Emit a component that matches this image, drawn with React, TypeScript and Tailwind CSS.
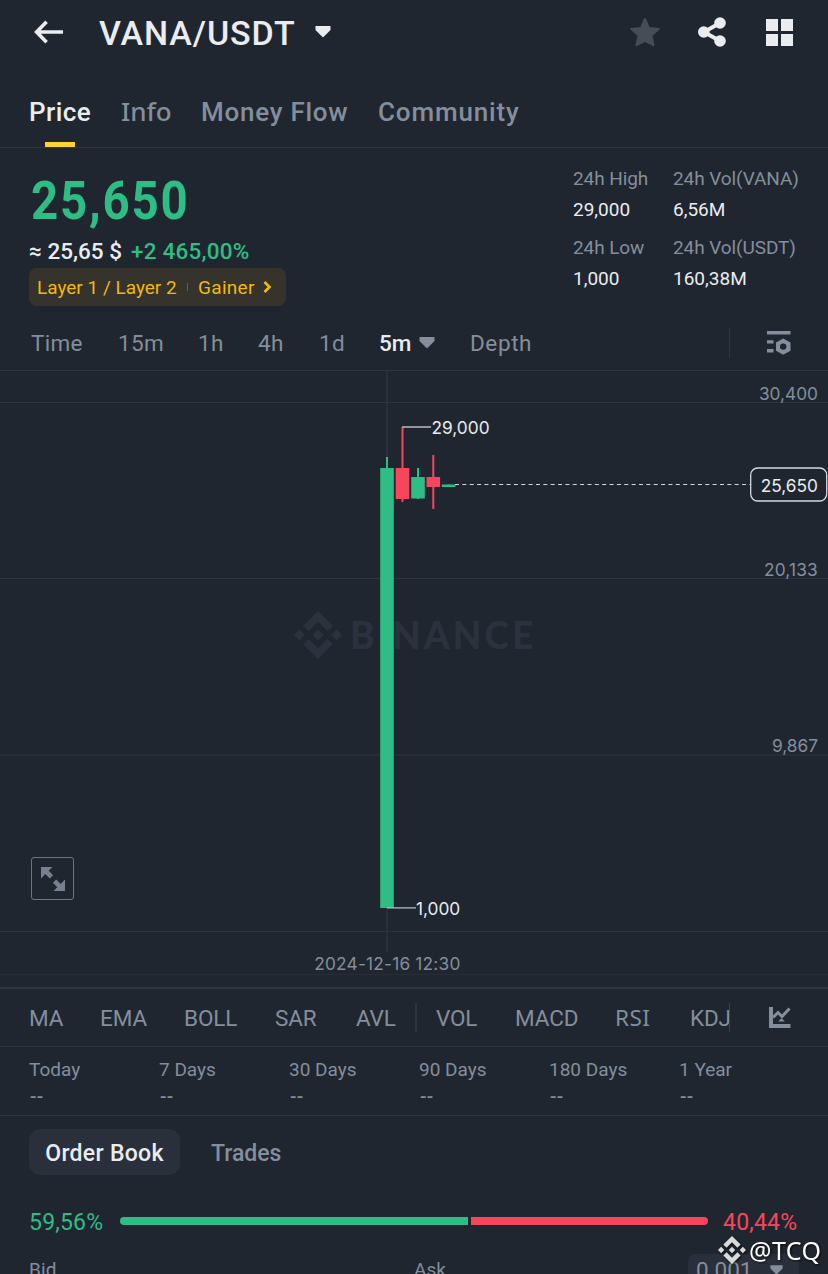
import React, { useState } from 'react';

type Candle = {
  x: number;
  high: number;
  low: number;
  top: number;
  bottom: number;
  up: boolean;
};

const GREEN = '#2ebd85';
const RED = '#f6465d';
const GRID = '#2e3541';

const tabs = [
  { label: 'Price', width: 'w-[92px]', style: 'tracking-[0.45px]' },
  { label: 'Info', width: 'w-[80px]', style: "font-['Noto_Sans',sans-serif] -mt-[2px]" },
  { label: 'Money Flow', width: 'w-[177px]', style: 'tracking-[0.75px]' },
  { label: 'Community', width: 'w-[150px]', style: 'tracking-[0.85px]' },
];

const stats = [
  { label: '24h High', value: '29,000' },
  { label: '24h Vol(VANA)', value: '6,56M' },
  { label: '24h Low', value: '1,000' },
  { label: '24h Vol(USDT)', value: '160,38M' },
];

const intervals = [
  { label: 'Time', width: 'w-[87px]' },
  { label: '15m', width: 'w-[80px]' },
  { label: '1h', width: 'w-[60px]' },
  { label: '4h', width: 'w-[61px]' },
  { label: '1d', width: 'w-[60px]' },
];

const mainIndicators = [
  { label: 'MA', width: 'w-[71px]' },
  { label: 'EMA', width: 'w-[84px]' },
  { label: 'BOLL', width: 'w-[91px]' },
  { label: 'SAR', width: 'w-[81px]' },
  { label: 'AVL', width: 'w-[59px]' },
];

const subIndicators = [
  { label: 'VOL', width: 'w-[79px]', style: 'pt-[3px] tracking-[-0.2px]' },
  { label: 'MACD', width: 'w-[100px]', style: 'pt-[3px] tracking-[-0.1px]' },
  { label: 'RSI', width: 'w-[75px]', style: "pt-px font-['Noto_Sans',sans-serif] tracking-[0.5px]" },
  { label: 'KDJ', width: 'w-[40px]', style: 'pt-[3px] tracking-[-0.2px]' },
];

const periods = ['Today', '7 Days', '30 Days', '90 Days', '180 Days', '1 Year'];

// coordinates are in chart pixels
const candles: Candle[] = [
  { x: 387, high: 86, low: 537, top: 97, bottom: 537, up: true },
  { x: 402.5, high: 56, low: 131, top: 97, bottom: 128, up: false },
  { x: 418, high: 97, low: 128, top: 106, bottom: 127.5, up: true },
  { x: 433.3, high: 84, low: 138, top: 106, bottom: 116, up: false },
  { x: 448.7, high: 113.5, low: 116, top: 113.5, bottom: 116, up: true },
];

const Caret: React.FC<{ className?: string }> = ({ className }) => (
  <svg width="16" height="12" viewBox="0 0 16 12" fill="currentColor" className={className}>
    <path d="M.5 0h15v4L9 10.6a1.3 1.3 0 0 1-2 0L.5 4z" />
  </svg>
);

const BinanceMark: React.FC<{ size: number }> = ({ size }) => (
  <svg width={size} height={size} viewBox="0 0 126.6 126.6" fill="currentColor">
    <path d="M38.7 53.2 63.3 28.6 87.9 53.2l14.3-14.3L63.3 0 24.4 38.9zM0 63.3 14.3 49l14.3 14.3-14.3 14.3zM38.7 73.4 63.3 98l24.6-24.6 14.3 14.3-38.9 38.9-38.9-38.9zM98 63.3 112.3 49l14.3 14.3-14.3 14.3zM77.8 63.3 63.3 48.8 48.8 63.3l14.5 14.5z" />
  </svg>
);

const Header: React.FC = () => (
  <header className="flex h-16 items-center pl-[34px] pr-[35px] text-[#eaecef]">
    <svg width="30" height="24" viewBox="0 0 30 24" fill="none" stroke="currentColor" strokeWidth="3.6">
      <path d="M29 12H3M12.6 1.8 2.6 12l10 10.2" />
    </svg>
    <h1 className="ml-[35px] w-[216px] whitespace-nowrap pt-px text-[34px] font-medium leading-none tracking-[0.9px]">VANA/USDT</h1>
    <Caret />
    <div className="ml-auto flex items-center">
      <svg width="30" height="30" viewBox="0 0 30 30" fill="#474d57" stroke="#474d57" strokeWidth="2" strokeLinejoin="round">
        <path d="m15 2 3.9 8.9 9.8 1-7.3 6.6 2.2 9.7-8.6-4.4-8.6 4.4 2.2-9.7L1.3 11.9l9.8-1z" />
      </svg>
      <svg width="28" height="30" viewBox="0 0 28 30" fill="currentColor" className="ml-[38px]">
        <path d="M22 6 6 15l16 9" fill="none" stroke="currentColor" strokeWidth="4" />
        <circle cx="22" cy="6" r="5.8" />
        <circle cx="5.8" cy="15" r="5.8" />
        <circle cx="22" cy="24" r="5.8" />
      </svg>
      <div className="ml-[40px] grid grid-cols-2 gap-[3px]">
        <span className="size-[12px] bg-current" />
        <span className="size-[12px] bg-current" />
        <span className="size-[12px] bg-current" />
        <span className="size-[12px] bg-current" />
      </div>
    </div>
  </header>
);

const PriceSummary: React.FC = () => (
  <section className="flex h-[167px] justify-between pl-[29px]">
    <div>
      <p className="ml-[2px] mt-[25px] h-[55px] origin-left scale-x-[0.88] whitespace-nowrap text-[54px] font-bold leading-[55px] tracking-[2px] text-[#2ebd85]">25,650</p>
      <p className="mt-[10px] flex h-[26px] items-center whitespace-nowrap text-[22.5px] font-medium leading-none">
        <span className="w-[102px] text-[#eaecef]">≈ 25,65 $</span>
        <span className="tracking-[0.2px] text-[#2ebd85]">+2 465,00%</span>
      </p>
      <div className="mt-[4px] flex h-[38px] w-[257px] items-center rounded-lg bg-[#36332d] pl-2 text-[19px] text-[#f0b90b]">
        <span className="w-[150px] whitespace-nowrap pt-[3px]">Layer 1 / Layer 2</span>
        <span className="h-2 w-px bg-[#77601d]" />
        <span className="ml-[10px] w-[65px] pt-[3px] tracking-[0.3px]">Gainer</span>
        <svg width="9" height="12" viewBox="0 0 9 12" fill="none" stroke="currentColor" strokeWidth="2.6">
          <path d="m1.5 1 5 5-5 5" />
        </svg>
      </div>
    </div>
    <div className="mt-[15px] grid w-[255px] grid-cols-[100px_155px] content-start text-[19px]">
      {stats.map((stat) => (
        <div key={stat.label} className="h-[69px] whitespace-nowrap leading-[31px]">
          <p className="tracking-[-0.08px] text-[#848e9c]">{stat.label}</p>
          <p className="text-[#eaecef]">{stat.value}</p>
        </div>
      ))}
    </div>
  </section>
);

const IntervalBar: React.FC = () => (
  <nav className="flex h-14 items-center border-b border-[#2e3541] pl-[31px] pr-[37px] text-[22.5px] tracking-[0.3px] text-[#848e9c]">
    {intervals.map((item) => (
      <button key={item.label} className={`${item.width} pt-[2px] text-left`}>{item.label}</button>
    ))}
    <button className="flex w-[91px] items-center text-left font-medium text-[#eaecef]">
      <span className="w-[40px] pt-[2px] tracking-normal">5m</span>
      <Caret className="text-[#848e9c]" />
    </button>
    <button className="pt-[2px] tracking-[0.6px]">Depth</button>
    <span className="ml-auto h-[30px] w-px bg-[#2e3541]" />
    <svg width="25" height="26" viewBox="0 0 25 26" fill="currentColor" className="ml-[36px]">
      <path d="M1 1h23.5v3.6H1zM1 10.2h6.5v3.3H1zM1 19h6.5v3.4H1z" />
      <path fillRule="evenodd" d="m17.2 8.5 7.3 4v8.2l-7.3 4-7.2-4v-8.2zM17.2 13.4a3.2 3.2 0 1 0 0 6.4 3.2 3.2 0 0 0 0-6.4z" />
    </svg>
  </nav>
);

const CandleChart: React.FC = () => (
  <section className="relative h-[618px] border-b-2 border-[#2e3541]">
    <div className="absolute left-[294px] top-[240px] flex items-center text-[#2b313d]">
      <BinanceMark size={48} />
      <span className="ml-[8px] pb-px font-['Lato',sans-serif] text-[37px] font-black leading-none tracking-[3.1px]">BINANCE</span>
    </div>
    <svg width="828" height="616" viewBox="0 0 828 616" className="relative block font-['Inter',sans-serif]">
      {[31.5, 207.5, 384, 560.5].map((y) => (
        <path key={y} d={`M0 ${y}H828`} stroke={GRID} strokeWidth="1.2" />
      ))}
      <path d="M0 603.5H828" stroke="#272e39" />
      <path d="M387 0V581" stroke={GRID} strokeWidth="1.5" />
      {candles.map((c) => (
        <g key={c.x} fill={c.up ? GREEN : RED}>
          <rect x={c.x - 1} y={c.high} width="2" height={c.low - c.high} />
          <rect x={c.x - 6.8} y={c.top} width="13.6" height={c.bottom - c.top} />
        </g>
      ))}
      <path d="M402 56H431M387 536.8H416" stroke="#b7bdc6" strokeWidth="1.3" />
      <path d="M455 113.5H750" stroke="#d5d8dd" strokeWidth="1.2" strokeDasharray="4 3.36" />
      <rect x="750.7" y="97" width="76" height="33" rx="7" fill="#1f2630" stroke="#d5d8dd" strokeWidth="1.3" />
      <g fontSize="17.3" fill="#eaecef">
        <text x="431.5" y="62.8">29,000</text>
        <text x="416" y="543.8">1,000</text>
        <text x="818" y="120.6" textAnchor="end">25,650</text>
      </g>
      <g fontSize="17.3" fill="#848e9c" textAnchor="end">
        <text x="818" y="28.8">30,400</text>
        <text x="818" y="204.6" letterSpacing="0.2">20,133</text>
        <text x="818" y="381">9,867</text>
        <text x="460.5" y="599" letterSpacing="0.2">2024-12-16 12:30</text>
      </g>
    </svg>
    <button className="absolute left-[31px] top-[486px] flex size-[43px] items-center justify-center rounded-[3px] border border-[#6b7482] text-[#76808f]">
      <svg width="24" height="24" viewBox="0 0 24 24" fill="currentColor">
        <path d="M0 0h11.5L7.7 3.8l4.4 4.4-3.3 3.3-4.5-4.4L0 11.5zM24 24H12.5l3.8-3.8-4.4-4.4 3.3-3.3 4.5 4.4 4.3-4.4z" />
      </svg>
    </button>
  </section>
);

const IndicatorBar: React.FC = () => (
  <nav className="flex h-[58px] items-center border-b border-[#2e3541] pl-[29px] text-[22.5px] tracking-[-0.1px] text-[#848e9c]">
    {mainIndicators.map((item) => (
      <button key={item.label} className={`${item.width} pt-[2px] text-left`}>{item.label}</button>
    ))}
    <span className="mr-[19px] h-[29px] w-[2px] bg-[#2e3541]" />
    {subIndicators.map((item) => (
      <button key={item.label} className={`${item.width} ${item.style} whitespace-nowrap text-left`}>{item.label}</button>
    ))}
    <span className="-ml-px h-[29px] w-px bg-[#3a424e]" />
    <svg width="22" height="22" viewBox="0 0 22 22" className="ml-[39px]" fill="none" stroke="currentColor">
      <path d="M2 0v19h19.5" strokeWidth="4" />
      <path d="m4 10.5 5-5 4 4L20.5 1.5" strokeWidth="3" />
      <path d="m9 14.5 3.5-3.2 3.5 3.2z" fill="currentColor" stroke="none" />
    </svg>
  </nav>
);

const Performance: React.FC = () => (
  <section className="grid h-[69px] grid-cols-[repeat(6,130px)] border-b border-[#2e3541] pl-[29px] pt-[9px] text-[19px] text-[#848e9c]">
    {periods.map((period) => (
      <div key={period} className="leading-[27px]">
        <p>{period}</p>
        <p className="pl-px font-medium tracking-[0.3px]">--</p>
      </div>
    ))}
  </section>
);

const OrderBook: React.FC = () => (
  <section className="h-[158px] pl-[29px] pr-[29px] pt-[13px]">
    <div className="flex h-[46px] items-center text-[23px] font-medium">
      <button className="h-[46px] w-[151px] rounded-[11px] bg-[#29303c] pt-[4px] tracking-[0.3px] text-[#eaecef]">Order Book</button>
      <button className="ml-[31px] pt-[4px] text-[#848e9c]">Trades</button>
    </div>
    <div className="mt-[33px] flex h-[26px] items-center text-[23px] leading-none">
      <span className="w-[91px] pt-[2px] tracking-[0.2px] text-[#2ebd85]">59,56%</span>
      <span className="h-2 w-[348px] rounded-l-full bg-[#2ebd85]" />
      <span className="ml-[3px] h-2 w-[237px] rounded-r-full bg-[#f6465d]" />
      <span className="ml-[15px] whitespace-nowrap pt-[2px] tracking-[0.2px] text-[#f6465d]">40,44%</span>
    </div>
    <div className="mt-[20px] flex h-[40px] text-[19px] text-[#848e9c]">
      <span className="w-[385px] pt-[2px] tracking-[0.2px]">Bid</span>
      <span className="w-[274px] pt-[2px]">Ask</span>
      <div className="flex h-[40px] w-[111px] justify-between rounded-t-lg bg-[#29303c] pl-[8px] pr-[16px] text-[22.5px]">
        <span>0.001</span>
        <Caret className="mt-[10px] w-[13px]" />
      </div>
    </div>
  </section>
);

const App: React.FC = () => {
  const [activeTab, setActiveTab] = useState('Price');

  return (
    <main className="relative h-[1274px] w-[828px] overflow-hidden bg-[#1f2630] font-['Roboto',sans-serif]">
      <Header />
      <nav className="flex h-[84px] items-center border-b border-[#2e3541] pl-[29px] pb-1 pt-[18px] text-[26px] font-medium">
        {tabs.map((tab) => (
          <button
            key={tab.label}
            onClick={() => setActiveTab(tab.label)}
            className={`relative h-full whitespace-nowrap text-left ${tab.width} ${tab.style} ${activeTab === tab.label ? 'text-[#eaecef]' : 'text-[#848e9c]'}`}
          >
            {tab.label}
            {activeTab === tab.label && (
              <span className="absolute -bottom-1 left-4 h-[5px] w-[30px] bg-[#fcd535]" />
            )}
          </button>
        ))}
      </nav>
      <PriceSummary />
      <IntervalBar />
      <CandleChart />
      <IndicatorBar />
      <Performance />
      <OrderBook />

      {/* Author tag over the order book */}
      <div className="absolute left-[718px] top-[1235px] flex items-center text-[#d9dadb] drop-shadow-[1px_1px_1px_rgba(0,0,0,0.7)]">
        <BinanceMark size={28} />
        <span className="ml-[3px] font-['Noto_Sans',sans-serif] text-[25px] leading-[30px] tracking-[0.4px] text-white">@TCQ</span>
      </div>
    </main>
  );
};

export default App;
